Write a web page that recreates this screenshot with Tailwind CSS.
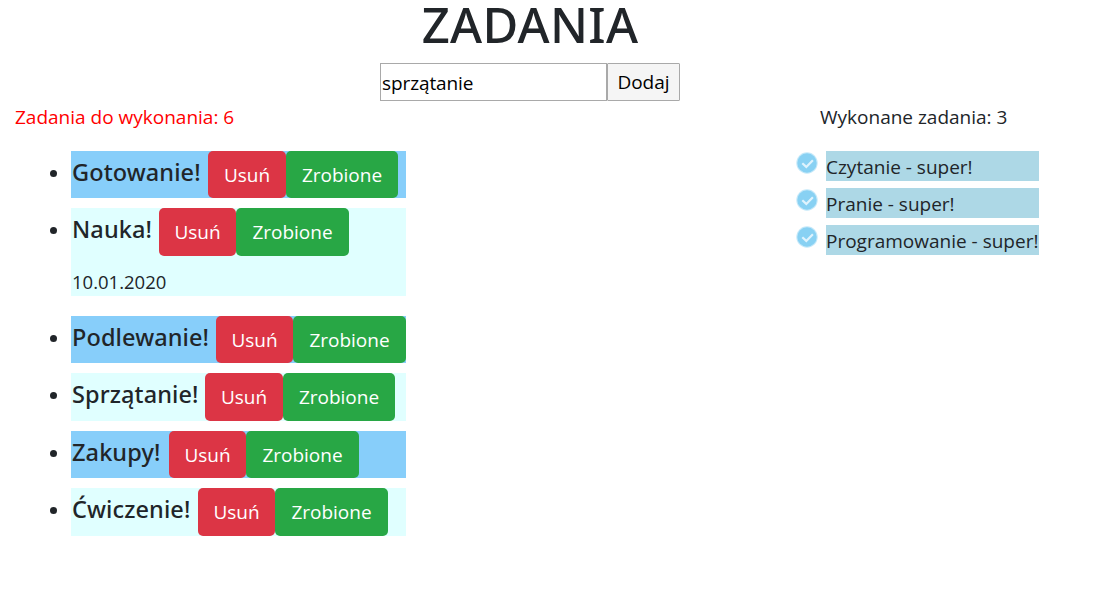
<!DOCTYPE html>
<html lang="pl">
<head>
<meta charset="utf-8">
<script src="https://cdn.jsdelivr.net/npm/@tailwindcss/browser@4"></script>
</head>
<body class="bg-white text-[#212529] font-['Open_Sans',sans-serif] overflow-hidden">
<div class="w-[1060px] h-[616px]">
  <h1 class="text-center font-['Noto_Sans',sans-serif] text-[49px] leading-[48px] h-[63px] font-medium tracking-[0.3px]">ZADANIA</h1>
  <form class="flex justify-center h-[38px]">
    <input value="sprzątanie" class="w-[227px] h-[38px] border border-[#a9a9a9] px-[1px] pt-[2px] text-[19px] tracking-[-0.1px] text-black outline-none">
    <button type="button" class="w-[73px] h-[38px] border border-[#a9a9a9] bg-[#f5f5f5] rounded-[1px] text-[19px] text-black">Dodaj</button>
  </form>
  <div class="flex">
    <section class="w-[780px] pl-[15px]">
      <p class="text-[19px] leading-[32px] h-[50px] text-[#ff0000]">Zadania do wykonania: 6</p>
      <ul class="list-disc pl-[56px] w-[391px] flex flex-col text-[20px]">
        <li class="h-[47px] mb-[10px] bg-[#87cefa] whitespace-nowrap"><div class="flex"><span class="w-[137px] pl-[1px] font-['Noto_Sans',sans-serif] text-[23.5px] leading-[42px] font-medium tracking-[0.1px]">Gotowanie!</span><button class="w-[78px] h-[47px] pt-[1px] rounded-[5px] bg-[#dc3545] text-white text-[19px]">Usuń</button><button class="w-[112px] h-[47px] pt-[1px] rounded-[5px] bg-[#28a745] text-white text-[19px]">Zrobione</button></div></li>
        <li class="h-[88px] mb-[20px] bg-[#e0ffff] whitespace-nowrap"><div class="flex"><span class="w-[88px] pl-[1px] font-['Noto_Sans',sans-serif] text-[23.5px] leading-[42px] font-medium tracking-[0.1px]">Nauka!</span><button class="w-[77px] h-[48px] pt-[1px] rounded-[5px] bg-[#dc3545] text-white text-[19px]">Usuń</button><button class="w-[113px] h-[48px] pt-[1px] rounded-[5px] bg-[#28a745] text-white text-[19px]">Zrobione</button></div><p class="pl-[1px] text-[18.5px] leading-[26px] mt-[13px]">10.01.2020</p></li>
        <li class="h-[47px] mb-[10px] bg-[#87cefa] whitespace-nowrap"><div class="flex"><span class="w-[145px] pl-[1px] font-['Noto_Sans',sans-serif] text-[23.5px] leading-[42px] font-medium tracking-[0.1px]">Podlewanie!</span><button class="w-[77px] h-[47px] pt-[1px] rounded-[5px] bg-[#dc3545] text-white text-[19px]">Usuń</button><button class="w-[113px] h-[47px] pt-[1px] rounded-[5px] bg-[#28a745] text-white text-[19px]">Zrobione</button></div></li>
        <li class="h-[48px] mb-[10px] bg-[#e0ffff] whitespace-nowrap"><div class="flex"><span class="w-[134px] pl-[1px] font-['Noto_Sans',sans-serif] text-[23.5px] leading-[42px] font-medium tracking-[0.1px]">Sprzątanie!</span><button class="w-[78px] h-[48px] pt-[1px] rounded-[5px] bg-[#dc3545] text-white text-[19px]">Usuń</button><button class="w-[112px] h-[48px] pt-[1px] rounded-[5px] bg-[#28a745] text-white text-[19px]">Zrobione</button></div></li>
        <li class="h-[47px] mb-[10px] bg-[#87cefa] whitespace-nowrap"><div class="flex"><span class="w-[98px] pl-[1px] font-['Noto_Sans',sans-serif] text-[23.5px] leading-[42px] font-medium tracking-[0.1px]">Zakupy!</span><button class="w-[77px] h-[47px] pt-[1px] rounded-[5px] bg-[#dc3545] text-white text-[19px]">Usuń</button><button class="w-[113px] h-[47px] pt-[1px] rounded-[5px] bg-[#28a745] text-white text-[19px]">Zrobione</button></div></li>
        <li class="h-[48px] bg-[#e0ffff] whitespace-nowrap"><div class="flex"><span class="w-[127px] pl-[1px] font-['Noto_Sans',sans-serif] text-[23.5px] leading-[42px] font-medium tracking-[0.1px]">Ćwiczenie!</span><button class="w-[77px] h-[48px] pt-[1px] rounded-[5px] bg-[#dc3545] text-white text-[19px]">Usuń</button><button class="w-[113px] h-[48px] pt-[1px] rounded-[5px] bg-[#28a745] text-white text-[19px]">Zrobione</button></div></li>
      </ul>
    </section>
    <section class="w-[280px]">
      <p class="text-[19px] leading-[32px] h-[50px] pl-[40px]">Wykonane zadania: 3</p>
      <ul class="pl-[16px] flex flex-col gap-[7px]">
        <li class="flex h-[30px]">
          <svg class="w-[22px] h-[22px] mt-[1px] mr-[8px] shrink-0" viewBox="0 0 22 22"><circle cx="11" cy="11" r="10.7" fill="#88d1f3" fill-opacity="0.5"/><circle cx="11" cy="11" r="9.7" fill="#88d1f3"/><path d="M6.3 11.2l4 3.7 6.6-6.7" fill="none" stroke="#dff3fd" stroke-width="2.2"/></svg>
          <span class="w-[213px] pt-[1px] bg-[#add8e6] text-[19px] leading-[30px] whitespace-nowrap">Czytanie - super!</span>
        </li>
        <li class="flex h-[30px]">
          <svg class="w-[22px] h-[22px] mt-[1px] mr-[8px] shrink-0" viewBox="0 0 22 22"><circle cx="11" cy="11" r="10.7" fill="#88d1f3" fill-opacity="0.5"/><circle cx="11" cy="11" r="9.7" fill="#88d1f3"/><path d="M6.3 11.2l4 3.7 6.6-6.7" fill="none" stroke="#dff3fd" stroke-width="2.2"/></svg>
          <span class="w-[213px] pt-[1px] bg-[#add8e6] text-[19px] leading-[30px] whitespace-nowrap">Pranie - super!</span>
        </li>
        <li class="flex h-[30px]">
          <svg class="w-[22px] h-[22px] mt-[1px] mr-[8px] shrink-0" viewBox="0 0 22 22"><circle cx="11" cy="11" r="10.7" fill="#88d1f3" fill-opacity="0.5"/><circle cx="11" cy="11" r="9.7" fill="#88d1f3"/><path d="M6.3 11.2l4 3.7 6.6-6.7" fill="none" stroke="#dff3fd" stroke-width="2.2"/></svg>
          <span class="w-[213px] pt-[1px] bg-[#add8e6] text-[19px] leading-[30px] whitespace-nowrap">Programowanie - super!</span>
        </li>
      </ul>
    </section>
  </div>
</div>
</body>
</html>
